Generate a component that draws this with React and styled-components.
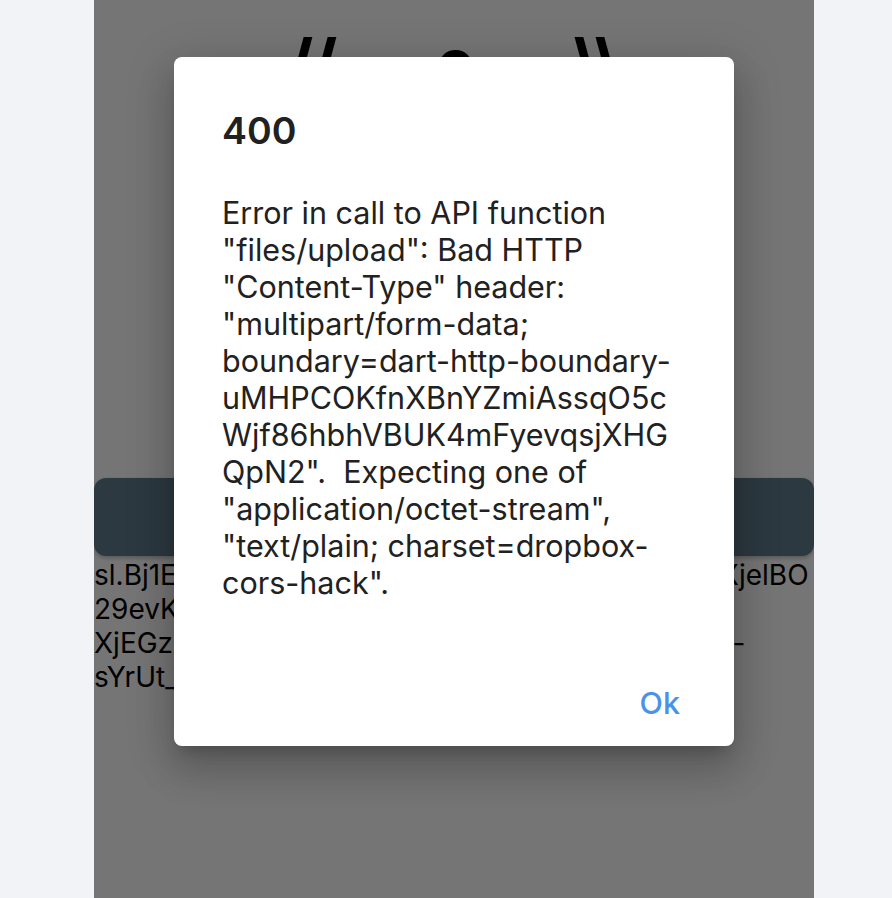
import React from 'react';
import styled, { createGlobalStyle } from 'styled-components';

const GlobalStyle = createGlobalStyle`
  html, body {
    margin: 0;
    height: 100%;
  }
  body {
    background: #f2f3f7;
    font-family: Inter, "Noto Sans", sans-serif;
    overflow: hidden;
  }
  #root {
    height: 100%;
  }
`;

const Page = styled.div`
  display: flex;
  justify-content: center;
  height: 100%;
  padding-left: 16px;
`;

const Column = styled.main`
  position: relative;
  width: 720px;
  height: 100%;
  background: #fff;
  overflow: hidden;
  display: flex;
  flex-direction: column;
`;

const Hero = styled.div`
  flex-shrink: 0;
  height: 478px;
  box-sizing: border-box;
  padding-top: 25px;
  display: flex;
  justify-content: center;
  align-items: flex-start;
  gap: 100px;
  font-size: 60px;
  font-weight: 800;
  line-height: 1.21;
  color: #000;
`;

const UploadButton = styled.button`
  flex-shrink: 0;
  height: 78px;
  border: 0;
  border-radius: 12px;
  background: #607d8b;
  box-shadow: 0 2px 4px rgba(0, 0, 0, 0.25);
`;

const TokenText = styled.p`
  margin: 2px 0 0;
  font-size: 28px;
  line-height: 34px;
  color: #000;
  overflow-wrap: anywhere;
`;

const Scrim = styled.div`
  position: absolute;
  inset: 0;
  background: rgba(0, 0, 0, 0.54);
`;

const Dialog = styled.div`
  position: absolute;
  top: 57px;
  left: 80px;
  width: 560px;
  box-sizing: border-box;
  padding: 50px 0 25px;
  background: #fff;
  border-radius: 8px;
  box-shadow: 0 11px 15px -7px rgba(0, 0, 0, 0.2),
    0 24px 38px 3px rgba(0, 0, 0, 0.14), 0 9px 46px 8px rgba(0, 0, 0, 0.12);
  color: #212121;
`;

const Title = styled.h2`
  margin: 0;
  padding: 0 48px;
  font-size: 37.5px;
  font-weight: 600;
  line-height: 47px;
`;

const Message = styled.p`
  margin: 40px 0 0;
  padding: 0 48px;
  font-size: 30.5px;
  line-height: 37px;
  white-space: pre-wrap;
  overflow-wrap: anywhere;
`;

const Actions = styled.div`
  display: flex;
  justify-content: flex-end;
  margin-top: 83px;
  padding-right: 54px;
`;

const TextButton = styled.button`
  border: 0;
  padding: 0;
  background: none;
  font-family: inherit;
  font-size: 30.5px;
  font-weight: 500;
  line-height: 37px;
  color: #4a91e8;
  cursor: pointer;
`;

const messageParts = [
  'Error in call to API function "files/upload": Bad HTTP "Content-Type" header: "multipart/form-data; boundary=dart-http-boundary-uMHPCOKfnXBnYZmiAssqO5c',
  'Wjf86hbhVBUK4mFyevqsjXHG',
  'QpN2".  Expecting one of "application/octet-stream", "text/plain; charset=dropbox-cors-hack".',
];

const tokenParts = [
  'sl.Bj1EhQ4tR8wLm2Zc7YpVn0Ka5dGs3Tm9FxjlXjelBO',
  '29evKu6Tb1Wq-XjEGzr5Pm8Ld2Hc9Vy4Nt7Sa3BwQe6Kd8Ro4F-sYrUt_Jk3Ge6Fo9Di1',
];

const withBreaks = (parts) =>
  parts.map((part, i) => (
    <React.Fragment key={i}>
      {i > 0 && <wbr />}
      {part}
    </React.Fragment>
  ));

export default function App() {
  return (
    <>
      <GlobalStyle />
      <Page>
        <Column>
          <Hero>
            <span>//</span>
            <span>o</span>
            <span>\\</span>
          </Hero>
          <UploadButton type="button" />
          <TokenText>{withBreaks(tokenParts)}</TokenText>

          <Scrim />
          <Dialog role="alertdialog">
            <Title>400</Title>
            <Message>{withBreaks(messageParts)}</Message>
            <Actions>
              <TextButton type="button">Ok</TextButton>
            </Actions>
          </Dialog>
        </Column>
      </Page>
    </>
  );
}
